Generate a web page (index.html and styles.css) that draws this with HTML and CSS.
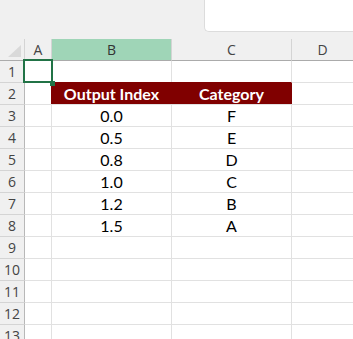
FILE: index.html
```html
<!DOCTYPE html>
<html>
<head>
<meta charset="utf-8">
<link rel="stylesheet" href="styles.css">
</head>
<body>
<div class="top">
  <div class="namebox"></div>
</div>
<div class="sheet">
  <div class="grid">
    <div class="corner"><svg width="24" height="21" viewBox="0 0 24 21"><polygon points="21,6 21,18 8,18" fill="#d9d9d9"/></svg></div>
    <div class="ch">A</div>
    <div class="ch sel">B</div>
    <div class="ch">C</div>
    <div class="ch">D</div>

    <div class="rh r1">1</div><div class="c a r1"></div><div class="c r1"></div><div class="c r1"></div><div class="c r1"></div>
    <div class="rh">2</div><div class="c a"></div><div class="c hd">Output Index</div><div class="c hd">Category</div><div class="c hdr"></div>
    <div class="rh">3</div><div class="c a"></div><div class="c">0.0</div><div class="c">F</div><div class="c"></div>
    <div class="rh">4</div><div class="c a"></div><div class="c">0.5</div><div class="c">E</div><div class="c"></div>
    <div class="rh">5</div><div class="c a"></div><div class="c">0.8</div><div class="c">D</div><div class="c"></div>
    <div class="rh">6</div><div class="c a"></div><div class="c">1.0</div><div class="c">C</div><div class="c"></div>
    <div class="rh">7</div><div class="c a"></div><div class="c">1.2</div><div class="c">B</div><div class="c"></div>
    <div class="rh">8</div><div class="c a"></div><div class="c">1.5</div><div class="c">A</div><div class="c"></div>
    <div class="rh">9</div><div class="c a"></div><div class="c"></div><div class="c"></div><div class="c"></div>
    <div class="rh">10</div><div class="c a"></div><div class="c"></div><div class="c"></div><div class="c"></div>
    <div class="rh">11</div><div class="c a"></div><div class="c"></div><div class="c"></div><div class="c"></div>
    <div class="rh">12</div><div class="c a"></div><div class="c"></div><div class="c"></div><div class="c"></div>
    <div class="rh">13</div><div class="c a"></div><div class="c"></div><div class="c"></div><div class="c"></div>
  </div>
  <div class="selection"><div class="handle"></div></div>
</div>
</body>
</html>
```
FILE: styles.css
```css
html, body {
  margin: 0;
  padding: 0;
  background: #f0f0f0;
  overflow: hidden;
  width: 353px;
  height: 339px;
}
.top {
  height: 39px;
  display: flex;
  justify-content: flex-end;
}
.namebox {
  width: 149px;
  height: 32px;
  box-sizing: border-box;
  background: #fff;
  border-left: 1px solid #dcdcdc;
  border-bottom: 1px solid #dcdcdc;
  border-bottom-left-radius: 5px;
}
.sheet {
  position: relative;
}
.grid {
  display: grid;
  grid-template-columns: 24px 27px 120px 120px 1fr;
  grid-template-rows: 21px repeat(13, 22px);
  background: #fff;
}
.corner {
  background: #f0f0f0;
  overflow: hidden;
}
.corner svg { display: block; }
.ch {
  background: #f0f0f0;
  border-left: 1px solid #d4d4d4;
  box-sizing: border-box;
  font-family: "Open Sans", sans-serif;
  font-size: 14px;
  color: #444;
  display: flex;
  align-items: center;
  justify-content: center;
  line-height: 1;
  padding-top: 1px;
}
.ch.sel {
  background: #9fd5b7;
  color: #333;
}
.rh {
  background: #f0f0f0;
  border-top: 1px solid #d4d4d4;
  box-sizing: border-box;
  font-family: "Open Sans", sans-serif;
  font-size: 14px;
  color: #444;
  display: flex;
  align-items: center;
  justify-content: center;
  line-height: 1;
}
.c {
  border-top: 1px solid #e1e1e1;
  border-left: 1px solid #e1e1e1;
  box-sizing: border-box;
  font-family: "Lato", sans-serif;
  font-size: 16px;
  color: #000;
  display: flex;
  align-items: center;
  justify-content: center;
  line-height: 1;
}
.c.a {
  border-left-color: #b8b8b8;
}
.r1 {
  border-top-color: #ababab;
}
.c.hd {
  background: #800000;
  border-color: #800000;
  color: #fff;
  font-weight: bold;
}
.c.hdr {
  border-left-color: #800000;
}
.selection {
  position: absolute;
  left: 23px;
  top: 20px;
  width: 30px;
  height: 24px;
  box-sizing: border-box;
  border: 2px solid #217346;
}
.handle {
  position: absolute;
  right: -4px;
  bottom: -5px;
  width: 5px;
  height: 5px;
  background: #217346;
}
```
